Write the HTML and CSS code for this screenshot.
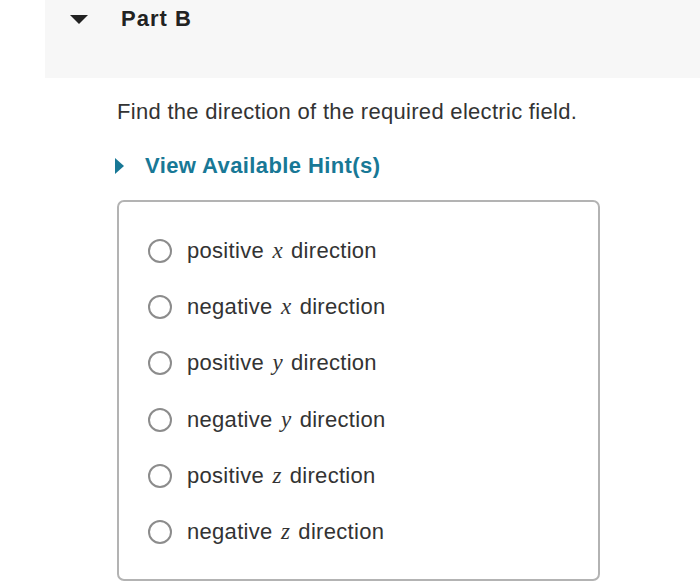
FILE: index.html
```html
<!DOCTYPE html>
<html>
<head>
<meta charset="utf-8">
<link rel="stylesheet" href="styles.css">
</head>
<body>
<div class="part-header">
  <span class="caret-down"></span>
  <span class="part-title">Part B</span>
</div>
<div class="content">
  <p class="question">Find the direction of the required electric field.</p>
  <div class="hint">
    <span class="caret-right"></span>
    <span class="hint-text">View Available Hint(s)</span>
  </div>
  <div class="choices">
    <label class="choice"><span class="radio"></span><span>positive <i class="m">x</i> direction</span></label>
    <label class="choice"><span class="radio"></span><span>negative <i class="m">x</i> direction</span></label>
    <label class="choice"><span class="radio"></span><span>positive <i class="m">y</i> direction</span></label>
    <label class="choice"><span class="radio"></span><span>negative <i class="m">y</i> direction</span></label>
    <label class="choice"><span class="radio"></span><span>positive <i class="m">z</i> direction</span></label>
    <label class="choice"><span class="radio"></span><span>negative <i class="m">z</i> direction</span></label>
  </div>
</div>
</body>
</html>
```
FILE: styles.css
```css
html, body {
  margin: 0;
  padding: 0;
  background: #fff;
  font-family: "Liberation Sans", Arial, sans-serif;
  color: #333;
}
.part-header {
  margin-left: 45px;
  height: 78px;
  background: #f7f7f7;
  display: flex;
  align-items: flex-start;
  padding-top: 5px;
  box-sizing: border-box;
}
.caret-down {
  width: 0;
  height: 0;
  border-left: 9px solid transparent;
  border-right: 9px solid transparent;
  border-top: 9px solid #222;
  margin-left: 25px;
  margin-top: 10px;
}
.part-title {
  font-weight: bold;
  font-size: 22px;
  letter-spacing: 1px;
  color: #222;
  margin-left: 33px;
  line-height: 28px;
}
.content {
  margin-left: 117px;
  width: 483px;
}
.question {
  margin: 20px 0 0 0;
  font-size: 22px;
  letter-spacing: 0.3px;
  line-height: 28px;
  color: #333;
}
.hint {
  display: flex;
  align-items: center;
  margin-top: 26px;
  height: 28px;
}
.caret-right {
  width: 0;
  height: 0;
  border-top: 8px solid transparent;
  border-bottom: 8px solid transparent;
  border-left: 9px solid #187896;
  margin-left: -2px;
}
.hint-text {
  font-weight: bold;
  font-size: 22px;
  letter-spacing: 0.4px;
  color: #187896;
  margin-left: 21px;
}
.choices {
  margin-top: 20px;
  border: 2px solid #b3b3b3;
  border-radius: 7px;
  height: 381px;
  box-sizing: border-box;
  padding-top: 35px;
  display: flex;
  flex-direction: column;
  gap: 28.2px;
}
.choice {
  display: flex;
  align-items: center;
  height: 28px;
  font-size: 22px;
  letter-spacing: 0.3px;
  color: #333;
}
.radio {
  width: 20px;
  height: 20px;
  border: 2px solid #8c8c8c;
  border-radius: 50%;
  margin-left: 29px;
  margin-right: 15px;
  flex: none;
}
.m {
  font-family: "Liberation Serif", "Times New Roman", serif;
  font-style: italic;
  font-size: 23px;
  letter-spacing: 0;
  margin: 0 2px;
}
```
